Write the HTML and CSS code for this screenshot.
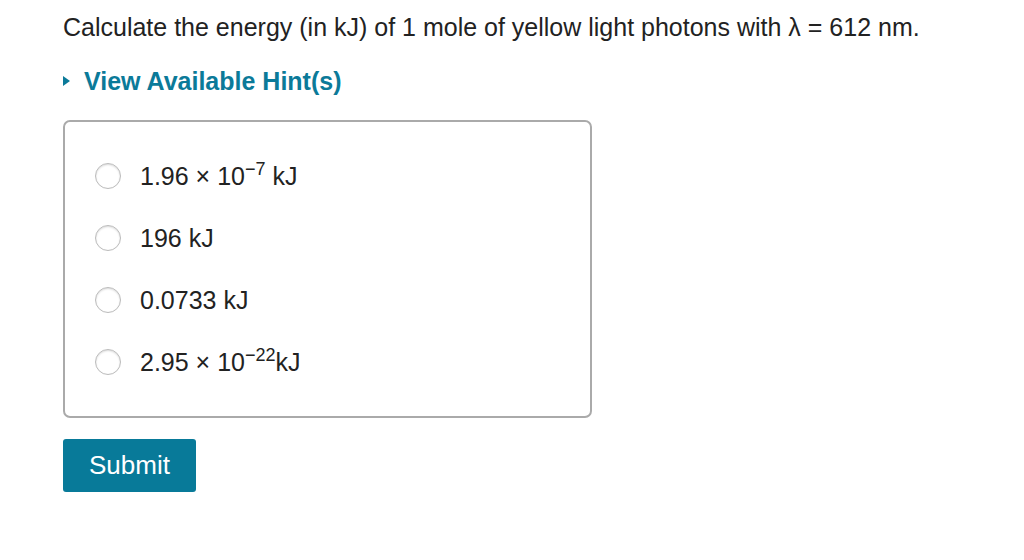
FILE: index.html
```html
<!doctype html>
<html lang="en">
<head>
    <meta charset="UTF-8">
    <title>Question</title>
    <link rel="stylesheet" href="styles.css">
</head>
<body>
<div class="question">
    <p class="question__text">Calculate the energy (in kJ) of 1 mole of yellow light photons with &lambda; = 612 nm.</p>
    <div class="hint">
        <span class="hint__arrow"></span>
        <span class="hint__label">View Available Hint(s)</span>
    </div>
    <div class="choices">
        <label class="choice">
            <span class="choice__radio"></span>
            <span class="choice__text">1.96 &times; 10<sup>&minus;7</sup> kJ</span>
        </label>
        <label class="choice">
            <span class="choice__radio"></span>
            <span class="choice__text">196 kJ</span>
        </label>
        <label class="choice">
            <span class="choice__radio"></span>
            <span class="choice__text">0.0733 kJ</span>
        </label>
        <label class="choice">
            <span class="choice__radio"></span>
            <span class="choice__text">2.95 &times; 10<sup>&minus;22</sup>kJ</span>
        </label>
    </div>
    <button class="button">Submit</button>
</div>
</body>
</html>
```

FILE: styles.css
```css
body,html{font-family:'Liberation Sans',Arial,sans-serif;padding:0;margin:0;background:#fff;color:#222}
.question{padding:12px 0 0 63px}
.question__text{font-size:25px;line-height:30px;margin:0}
.hint{display:flex;align-items:center;margin-top:24px;color:#0b7a99;font-weight:bold;font-size:25px;line-height:30px}
.hint__arrow{width:0;height:0;border-top:5px solid transparent;border-bottom:5px solid transparent;border-left:7px solid #0b7a99;margin-right:14px}
.choices{width:529px;height:298px;box-sizing:border-box;margin-top:24px;border:2px solid #aaa;border-radius:7px;padding:23px 0 0 30px}
.choice{display:flex;align-items:center;height:62px}
.choice__radio{width:24px;height:24px;border:1px solid #bbb;border-radius:50%;box-shadow:inset 0 1px 2px rgba(0,0,0,.15);background:#fff;margin-right:19px}
.choice__text{font-size:25px;line-height:30px}
.choice__text sup{font-size:18px;line-height:0;vertical-align:10px}
.button{display:block;margin-top:21px;width:133px;height:53px;background:#087a99;color:#fff;border:0;border-radius:3px;font-family:inherit;font-size:26px;padding:0}
```
